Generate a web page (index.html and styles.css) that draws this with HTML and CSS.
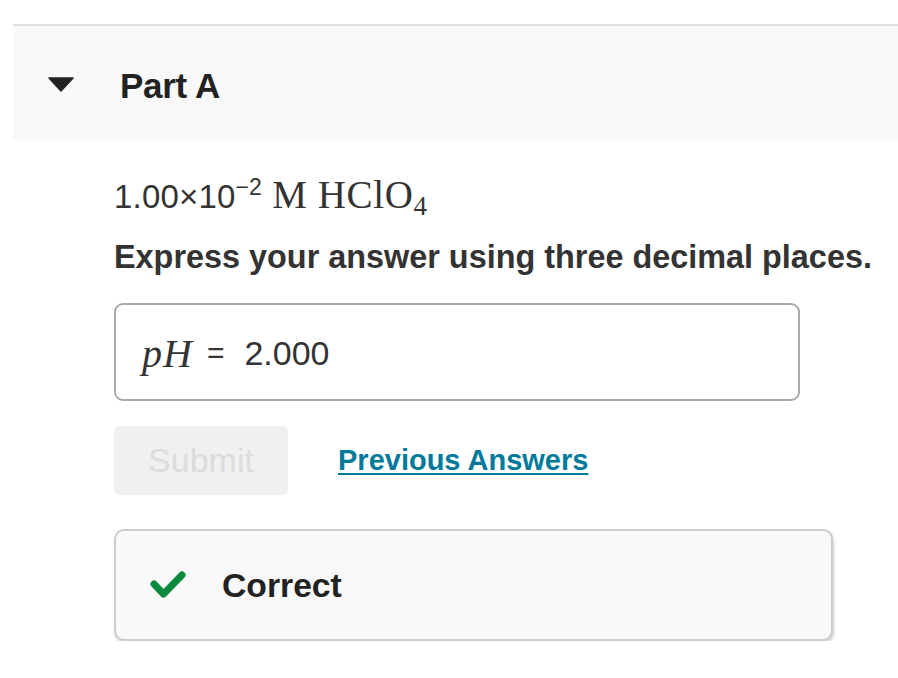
FILE: index.html
```html
<!DOCTYPE html>
<html>
<head>
<meta charset="utf-8">
<link rel="stylesheet" href="styles.css">
</head>
<body>
<div class="part-header">
  <svg class="caret" width="26" height="15" viewBox="0 0 26 15"><path d="M1 1 L25 1 L13 14 Z" fill="#222" stroke="#222" stroke-width="1.5" stroke-linejoin="round"/></svg>
  <span class="part-title">Part A</span>
</div>
<div class="content">
  <div class="formula"><span class="sans">1.00×10</span><sup class="sup">−2</sup><span class="serif">&nbsp;M HClO<sub class="sub">4</sub></span></div>
  <div class="instruction">Express your answer using three decimal places.</div>
  <div class="answer-box">
    <span class="var">pH</span><span class="eq">=</span><span class="value">2.000</span>
  </div>
  <div class="actions">
    <div class="submit">Submit</div>
    <a class="prev-link" href="#">Previous Answers</a>
  </div>
  <div class="feedback">
    <svg class="check" width="36" height="28" viewBox="0 0 36 28"><polyline points="4,13 13.5,23 32,4" fill="none" stroke="#0a8a3c" stroke-width="7" stroke-linejoin="round" stroke-linecap="round"/></svg>
    <span class="correct">Correct</span>
  </div>
</div>
</body>
</html>
```
FILE: styles.css
```css
body {
  margin: 0;
  background: #fff;
  font-family: "Liberation Sans", Arial, sans-serif;
  color: #333;
}
.part-header {
  margin: 24px 0 0 13px;
  border-top: 2px solid #e0e0e0;
  background: #f9f9f9;
  height: 115px;
  display: flex;
  align-items: center;
  padding-left: 35px;
}
.caret {
  display: block;
  margin-top: 1px;
}
.part-title {
  margin-left: 46px;
  margin-top: 4px;
  font-size: 35px;
  font-weight: bold;
  color: #222;
  letter-spacing: -0.3px;
}
.content {
  padding-left: 114px;
}
.formula {
  margin-top: 34px;
  height: 40px;
  line-height: 40px;
  white-space: nowrap;
}
.sans {
  font-size: 33px;
  color: #333;
  letter-spacing: 0.2px;
}
.sup {
  font-size: 23px;
  vertical-align: 13px;
  line-height: 0;
  color: #333;
}
.serif {
  font-family: "Liberation Serif", "Times New Roman", serif;
  font-size: 39px;
  color: #333;
  letter-spacing: 0.6px;
}
.sub {
  font-size: 27px;
  vertical-align: -7px;
  line-height: 0;
}
.instruction {
  margin-top: 22px;
  font-size: 32.4px;
  line-height: 40px;
  font-weight: bold;
  color: #333;
}
.answer-box {
  margin-top: 26px;
  width: 686px;
  height: 98px;
  box-sizing: border-box;
  border: 2px solid #aaa;
  border-radius: 9px;
  display: flex;
  align-items: center;
  padding-left: 26px;
  padding-top: 2px;
}
.var {
  font-family: "Liberation Serif", "Times New Roman", serif;
  font-style: italic;
  font-size: 40px;
  letter-spacing: 1px;
  color: #333;
}
.eq {
  font-size: 30px;
  margin-left: 14px;
  color: #333;
}
.value {
  font-size: 34px;
  margin-left: 20px;
  color: #333;
}
.actions {
  margin-top: 25px;
  display: flex;
  align-items: center;
}
.submit {
  width: 174px;
  height: 69px;
  background: #f0f0f0;
  border-radius: 5px;
  color: #dcdcdc;
  font-size: 34px;
  display: flex;
  align-items: center;
  justify-content: center;
}
.prev-link {
  margin-left: 50px;
  font-size: 29px;
  font-weight: bold;
  color: #007a9a;
  text-decoration: underline;
  text-decoration-thickness: 2px;
  text-underline-offset: 3px;
}
.feedback {
  margin-top: 34px;
  width: 719px;
  height: 112px;
  box-sizing: border-box;
  border: 2px solid #ccc;
  border-radius: 10px;
  background: #f9f9f9;
  box-shadow: 1px 2px 3px rgba(0, 0, 0, 0.18);
  display: flex;
  align-items: center;
  padding-left: 34px;
}
.check {
  display: block;
}
.correct {
  margin-left: 36px;
  font-size: 33.7px;
  font-weight: bold;
  color: #222;
}
```
